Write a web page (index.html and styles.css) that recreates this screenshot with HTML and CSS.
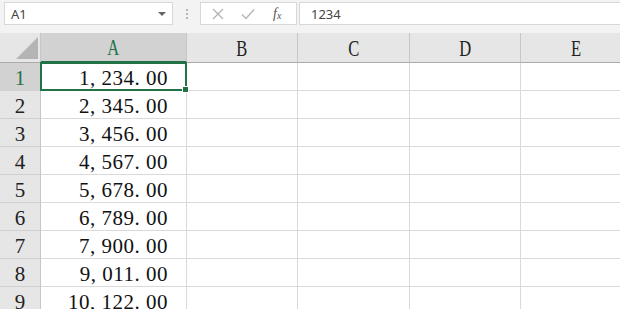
FILE: index.html
```html
<!DOCTYPE html>
<html lang="en">
<head>
  <meta charset="UTF-8">
  <title>Sheet1</title>
  <link rel="stylesheet" href="styles.css">
</head>
<body>
  <div class="formula-bar">
    <div class="name-box">
      <span>A1</span>
      <span class="caret"></span>
    </div>
    <div class="grip"><i></i><i></i><i></i></div>
    <div class="fx-box">
      <svg class="btn-icon" width="12" height="12" viewBox="0 0 12 12">
        <path d="M1 1 L11 11 M11 1 L1 11" stroke="#b3b3b3" stroke-width="1.3" fill="none"/>
      </svg>
      <svg class="btn-icon" width="14" height="12" viewBox="0 0 14 12">
        <path d="M1 6.5 L5 10.5 L13 1.5" stroke="#b3b3b3" stroke-width="1.3" fill="none"/>
      </svg>
      <span class="fx">f<sub>x</sub></span>
    </div>
    <div class="formula-input">1234</div>
  </div>

  <div class="sheet">
    <div class="corner"></div>
    <div class="col-head selected"><span>A</span></div>
    <div class="col-head"><span>B</span></div>
    <div class="col-head"><span>C</span></div>
    <div class="col-head"><span>D</span></div>
    <div class="col-head"><span>E</span></div>

    <div class="row-head selected">1</div>
    <div class="cell num active">1, 234. 00</div>
    <div class="cell"></div><div class="cell"></div><div class="cell"></div><div class="cell"></div>

    <div class="row-head">2</div>
    <div class="cell num">2, 345. 00</div>
    <div class="cell"></div><div class="cell"></div><div class="cell"></div><div class="cell"></div>

    <div class="row-head">3</div>
    <div class="cell num">3, 456. 00</div>
    <div class="cell"></div><div class="cell"></div><div class="cell"></div><div class="cell"></div>

    <div class="row-head">4</div>
    <div class="cell num">4, 567. 00</div>
    <div class="cell"></div><div class="cell"></div><div class="cell"></div><div class="cell"></div>

    <div class="row-head">5</div>
    <div class="cell num">5, 678. 00</div>
    <div class="cell"></div><div class="cell"></div><div class="cell"></div><div class="cell"></div>

    <div class="row-head">6</div>
    <div class="cell num">6, 789. 00</div>
    <div class="cell"></div><div class="cell"></div><div class="cell"></div><div class="cell"></div>

    <div class="row-head">7</div>
    <div class="cell num">7, 900. 00</div>
    <div class="cell"></div><div class="cell"></div><div class="cell"></div><div class="cell"></div>

    <div class="row-head">8</div>
    <div class="cell num">9, 011. 00</div>
    <div class="cell"></div><div class="cell"></div><div class="cell"></div><div class="cell"></div>

    <div class="row-head">9</div>
    <div class="cell num">10, 122. 00</div>
    <div class="cell"></div><div class="cell"></div><div class="cell"></div><div class="cell"></div>
  </div>
</body>
</html>
```

FILE: styles.css
```css
body {
  margin: 0;
  width: 620px;
  height: 309px;
  overflow: hidden;
  background-color: #f3f3f3;
  font-family: "Liberation Serif", serif;
}

/* Formula bar */
.formula-bar {
  display: flex;
  align-items: flex-start;
  height: 33px;
  padding: 2px 0 0 4px;
  box-sizing: border-box;
  font-family: "Noto Sans", "Liberation Sans", sans-serif;
  font-size: 13px;
  color: #444;
}

.name-box, .fx-box, .formula-input {
  height: 23px;
  background-color: #fff;
  border: 1px solid #d8d8d8;
  box-sizing: border-box;
  display: flex;
  align-items: center;
}

.name-box {
  width: 169px;
  justify-content: space-between;
  padding: 0 6px 0 6px;
}

.caret {
  width: 0;
  height: 0;
  border-left: 4px solid transparent;
  border-right: 4px solid transparent;
  border-top: 4px solid #666;
}

.grip {
  width: 27px;
  height: 23px;
  display: flex;
  flex-direction: column;
  align-items: center;
  justify-content: center;
  gap: 2px;
}

.grip i {
  width: 2px;
  height: 2px;
  background-color: #b5b5b5;
}

.fx-box {
  width: 97px;
  padding-left: 11px;
}

.btn-icon {
  margin-right: 17px;
}

.fx {
  font-family: "Liberation Serif", serif;
  font-style: italic;
  font-size: 14px;
  color: #555;
  margin-left: 1px;
}

.fx sub {
  font-size: 10px;
  vertical-align: -1px;
}

.formula-input {
  flex: 1;
  margin-left: 2px;
  padding-left: 11px;
  border-right: none;
}

/* Grid */
.sheet {
  display: grid;
  grid-template-columns: 41px 146px 111px 112px 111px 111px;
  grid-template-rows: 30px repeat(9, 28px);
  background-color: #fff;
}

.corner, .col-head, .row-head {
  background-color: #e6e6e6;
  box-sizing: border-box;
}

.corner {
  display: flex;
  align-items: flex-end;
  justify-content: flex-end;
  padding: 0 2px 3px 0;
  border-right: 1px solid #c6c6c6;
  border-bottom: 1px solid #ababab;
}

.corner::before {
  content: "";
  width: 22px;
  height: 22px;
  background-color: #b4b4b4;
  clip-path: polygon(100% 0, 100% 100%, 0 100%);
}

.col-head {
  display: flex;
  align-items: center;
  justify-content: center;
  border-right: 1px solid #c6c6c6;
  border-bottom: 1px solid #ababab;
  font-size: 23px;
  color: #222;
  padding-top: 2px;
}

.col-head span {
  display: inline-block;
  transform: scaleX(0.72);
}

.row-head {
  display: flex;
  align-items: center;
  justify-content: center;
  border-right: 1px solid #c6c6c6;
  border-bottom: 1px solid #d0d0d0;
  font-size: 21px;
  color: #222;
  padding-top: 3px;
}

.col-head.selected, .row-head.selected {
  background-color: #d2d2d2;
  color: #217346;
}

.col-head.selected {
  border-bottom: 2px solid #217346;
}

.cell {
  border-right: 1px solid #dadada;
  border-bottom: 1px solid #dadada;
  box-sizing: border-box;
}

.num {
  display: flex;
  align-items: center;
  justify-content: flex-end;
  padding: 3px 18px 0 0;
  font-size: 21px;
  letter-spacing: 0.5px;
  color: #111;
  white-space: pre;
}

.cell.active {
  position: relative;
}

.cell.active::after {
  content: "";
  position: absolute;
  left: -1px;
  top: -1px;
  right: -1px;
  bottom: -1px;
  border: 2px solid #217346;
}

.cell.active::before {
  content: "";
  position: absolute;
  right: -3px;
  bottom: -3px;
  width: 5px;
  height: 5px;
  background-color: #217346;
  border: 1px solid #fff;
  z-index: 1;
}
```
